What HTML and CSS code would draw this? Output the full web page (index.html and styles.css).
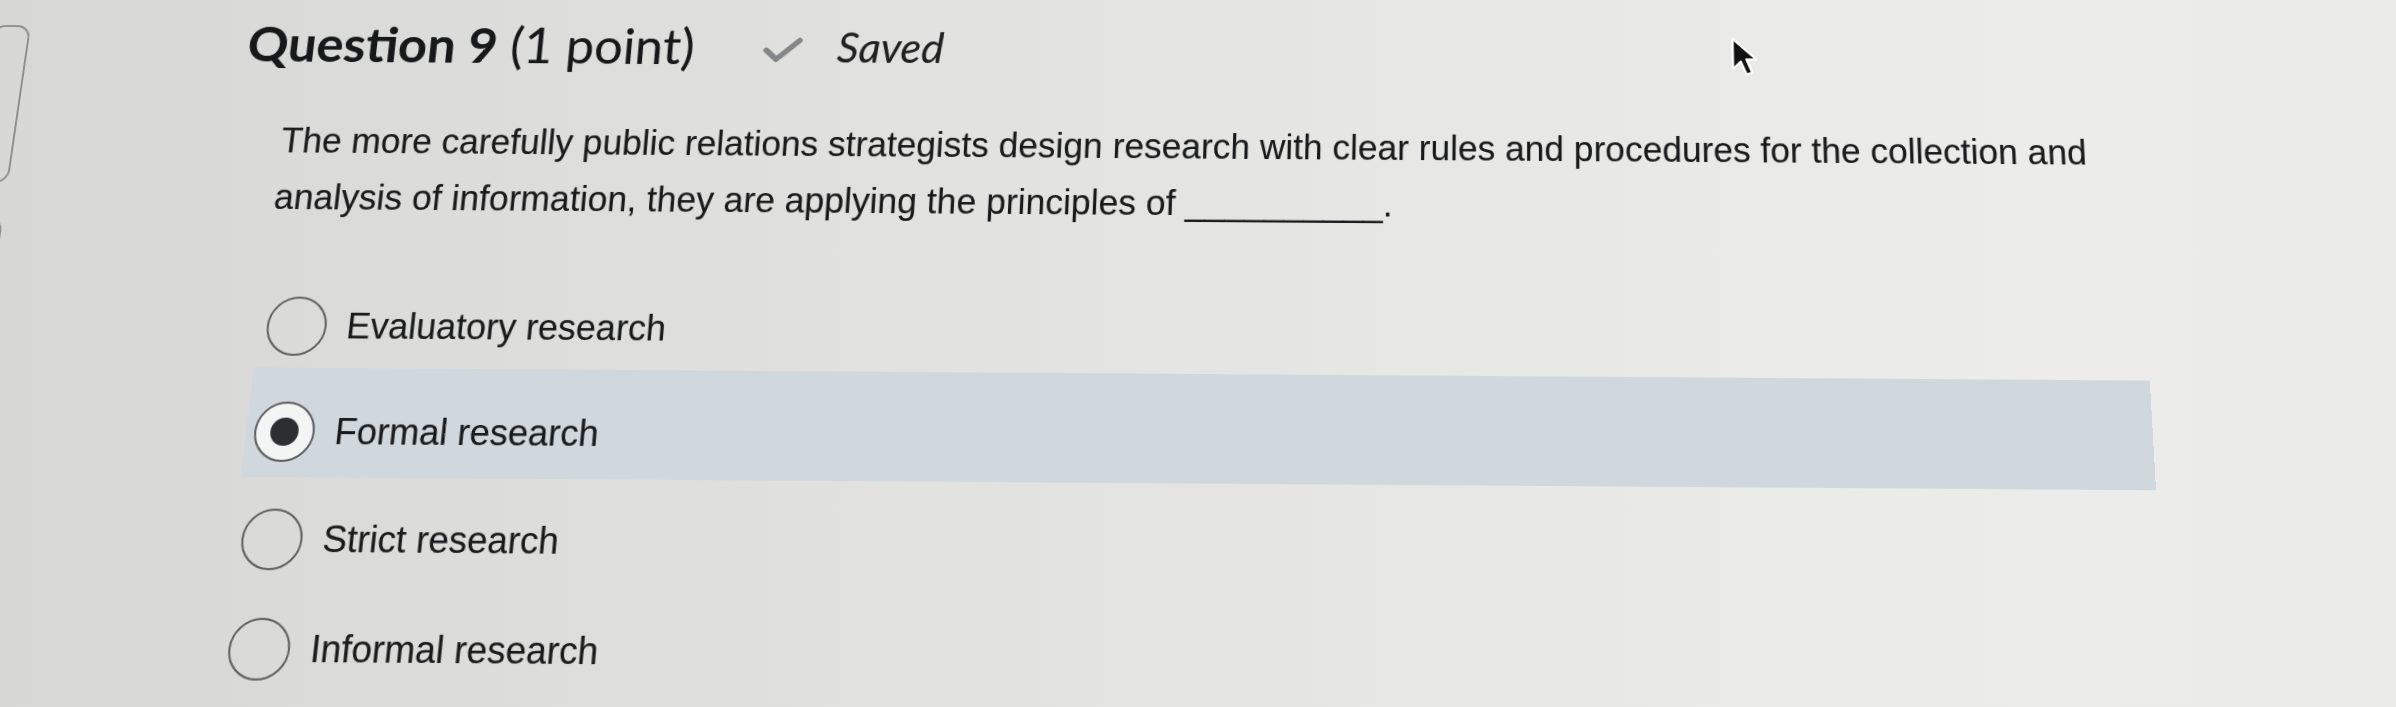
FILE: index.html
```html
<!DOCTYPE html>
<html lang="en">
<head>
    <meta charset="UTF-8">
    <meta name="viewport" content="width=device-width, initial-scale=1.0">
    <title>Question 9</title>
    <link rel="stylesheet" href="styles.css">
</head>
<body>
    <div class="screen">
        <aside class="rail">
            <div class="rail-box"></div>
            <div class="rail-box rail-box-next"></div>
        </aside>

        <main class="question">
            <header class="question-head">
                <h1><b>Question 9</b> (1 point)</h1>
                <span class="status">
                    <svg class="check" viewBox="0 0 44 30" width="43" height="29">
                        <path d="M4 15 L15 25 L39 4" fill="none" stroke="#848687" stroke-width="6" stroke-linecap="round" stroke-linejoin="round"/>
                    </svg>
                    <em>Saved</em>
                </span>
            </header>

            <p class="prompt">The more carefully public relations strategists design research with clear rules and procedures for the collection and analysis of information, they are applying the principles of __________.</p>

            <ul class="choices">
                <li class="choice"><span class="radio"></span>Evaluatory research</li>
                <li class="choice is-selected"><span class="radio"></span>Formal research</li>
                <li class="choice"><span class="radio"></span>Strict research</li>
                <li class="choice"><span class="radio"></span>Informal research</li>
            </ul>
        </main>

        <!-- mouse pointer sitting over the page -->
        <svg class="pointer" viewBox="0 0 24 38" width="28" height="44">
            <path d="M2 2 L2 30 L9 23 L14 35 L19 33 L14 21 L23 21 Z" fill="#111" stroke="#fff" stroke-width="2" stroke-linejoin="round"/>
        </svg>
    </div>
</body>
</html>
```

FILE: styles.css
```css
html, body {
    margin: 0;
    height: 100%;
    overflow: hidden;
}

body {
    background: linear-gradient(90deg, #d7d7d5 0%, #dfdfdd 30%, #e7e7e5 60%, #ececea 85%, #ebebe9 100%);
    font-family: "Liberation Sans", Arial, sans-serif;
    color: #191a1b;
    text-shadow: 0 0 1px rgba(0, 0, 0, 0.3);
}

/* the shot is a photo of a monitor, so the page is tilted a little */
.screen {
    position: relative;
    display: flex;
    width: 2396px;
    height: 707px;
    transform-origin: 1460px 350px;
    transform: perspective(1500px) rotateX(8deg) rotate(0.4deg);
}

.rail {
    width: 40px;
    margin-left: -56px;
    flex: none;
}

.rail-box {
    height: 163px;
    margin-top: 22px;
    border: 2px solid #8e8f90;
    border-radius: 14px;
}

.rail-box-next {
    margin-top: 36px;
}

.question {
    flex: 1;
    padding: 8px 0 0 226px;
}

.question-head {
    display: flex;
    align-items: flex-start;
    height: 62px;
}

.question-head h1 {
    margin: 0;
    font-family: Lato, "Liberation Sans", sans-serif;
    font-size: 52px;
    font-weight: 400;
    line-height: 62px;
    color: #17181a;
}

.question-head h1 b {
    font-weight: 700;
}

.status {
    display: flex;
    align-items: center;
    margin: 5px 0 0 70px;
}

.check {
    margin: 8px 34px 0 0;
}

.status em {
    font-family: Lato, "Liberation Sans", sans-serif;
    font-size: 44px;
    line-height: 53px;
    color: #1f2021;
}

.prompt {
    width: 1870px;
    margin: 43px 0 0 46px;
    font-size: 36px;
    line-height: 59px;
}

.choices {
    display: flex;
    flex-direction: column;
    gap: 46px;
    width: 1892px;
    margin: 73px 0 0 46px;
    padding: 0;
    list-style: none;
}

.choice {
    display: flex;
    align-items: center;
    gap: 20px;
    height: 60px;
    padding-left: 8px;
    font-size: 36px;
}

.choice.is-selected {
    padding-top: 34px;
    padding-bottom: 15px;
    margin: -34px 0 -15px;
    background: #d0d7dd;
}

.radio {
    width: 56px;
    height: 56px;
    border: 2px solid #5f6061;
    border-radius: 50%;
    flex: none;
}

.is-selected .radio {
    display: flex;
    align-items: center;
    justify-content: center;
    background: #f3f4f4;
    border-color: #5d5e5f;
}

.is-selected .radio::after {
    content: "";
    width: 28px;
    height: 28px;
    border-radius: 50%;
    background: #2c2f31;
}

.pointer {
    position: absolute;
    left: 1736px;
    top: 22px;
}
```
